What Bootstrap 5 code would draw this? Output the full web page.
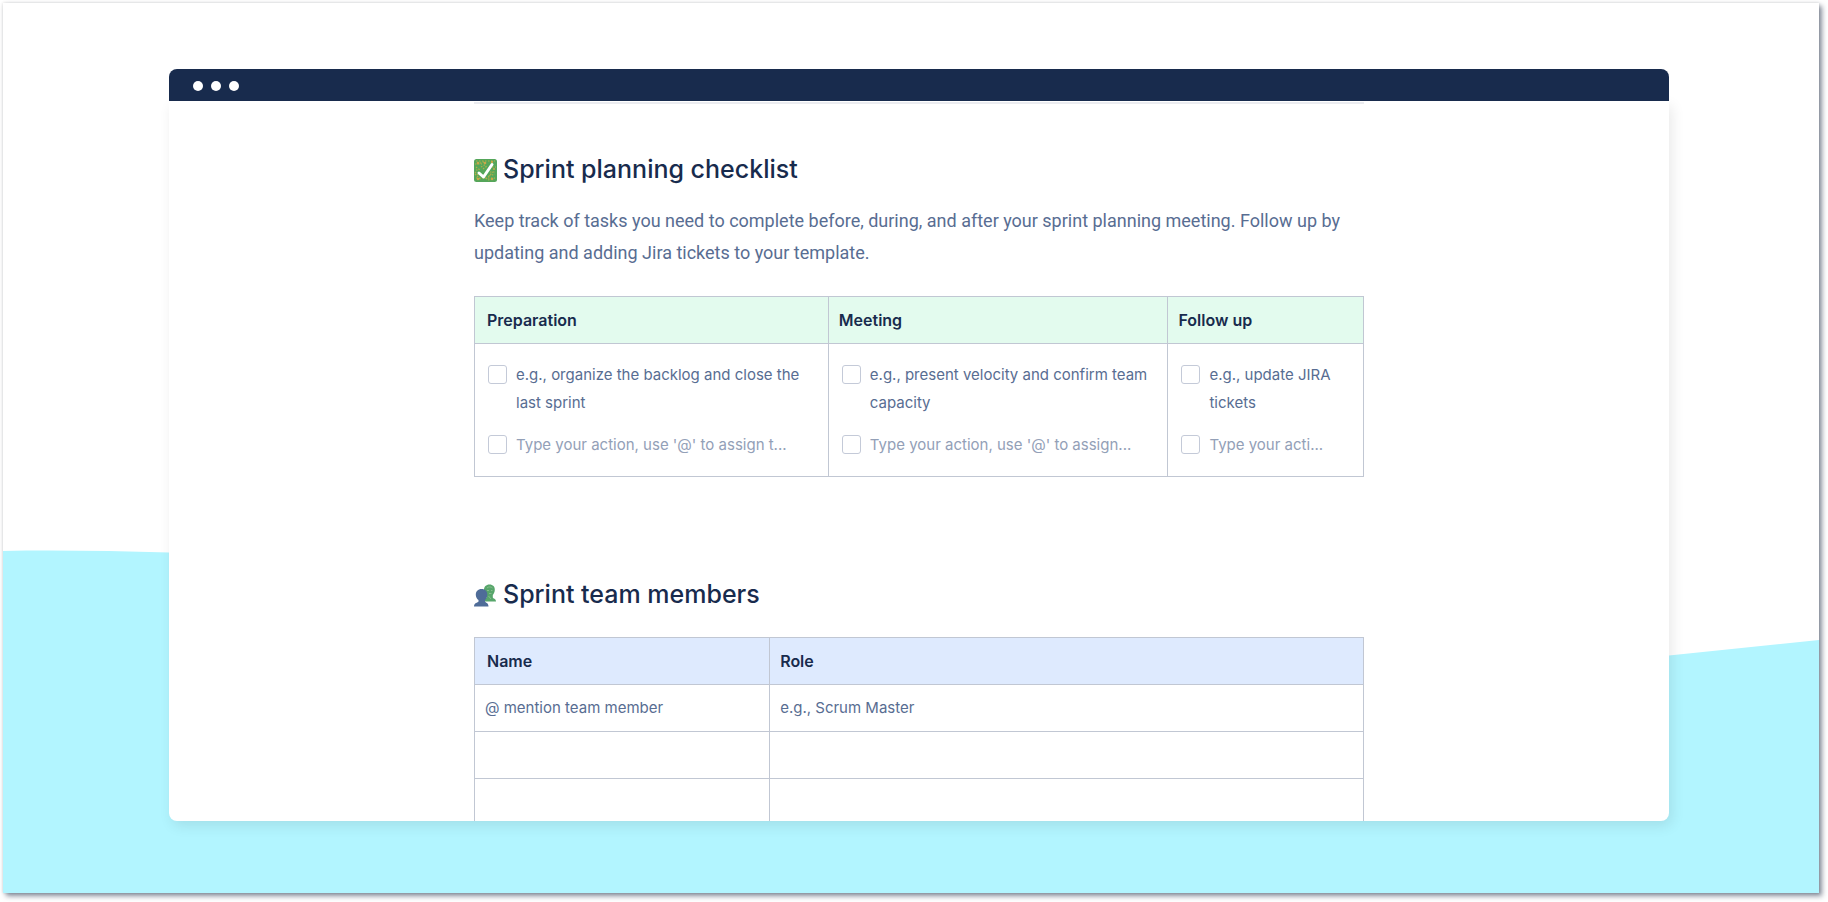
<!DOCTYPE html>
<html lang="en">
<head>
<meta charset="utf-8">
<meta name="viewport" content="width=device-width, initial-scale=1">
<title>Sprint planning</title>
<link href="https://cdn.jsdelivr.net/npm/bootstrap@5.3.0/dist/css/bootstrap.min.css" rel="stylesheet">
<style>
  :root {
    --navy: #182b4d;
    --slate: #586d92;
    --hint: #93a0b7;
    --line: #c1c7d3;
    --cyan: #b2f5ff;
  }
  body {
    font-family: Inter, "Liberation Sans", sans-serif;
    color: var(--slate);
    padding: 3px 9px 9px 3px;
    background: #fff;
  }
  .stage {
    padding: 66px 150px 72px 166px;
    box-shadow: 3px 3px 5px rgba(20, 33, 61, .5), 0 0 3px rgba(0, 0, 0, .15);
  }
  .wave { z-index: 0; fill: var(--cyan); }
  .app-window { z-index: 1; min-height: 0; }
  .title-bar {
    z-index: 2;
    background: var(--navy);
    border-radius: 8px 8px 0 0;
    padding: 12px 24px 10px;
  }
  .dot { width: 10px; height: 10px; background: #fff; }
  .page-body {
    min-height: 0;
    border-radius: 0 0 8px 8px;
    box-shadow: 3px 5px 14px rgba(0, 0, 0, .09);
    padding: 1px 12px 0;
  }
  .doc { max-width: 890px; }
  .doc-rule { height: 2px; background: #ebecf0; border: 0; opacity: 1; margin: 0 0 49px; }
  .doc h2 { gap: 6px; font-size: 25px; line-height: 32px; font-weight: 500; color: var(--navy); }
  .emoji { width: 23px; height: 23px; margin-top: 3px; }
  .intro {
    font-family: Roboto, "Liberation Sans", sans-serif;
    font-size: 18px;
    line-height: 32px;
    margin: 20px 0 27px;
  }
  .grid-table {
    --bs-table-bg: transparent;
    table-layout: fixed;
    border-color: var(--line);
    color: inherit;
    font-size: 15px;
    line-height: 28px;
    margin: 0;
  }
  .grid-table > :not(caption) > * > * { border: 1px solid var(--line); padding: 9px 10px; height: 47px; color: inherit; }
  .grid-table > thead > tr > th { font-size: 16px; font-weight: 600; color: var(--navy); }
  .grid-table > thead > tr > th:first-child { padding-left: 12px; }
  .grid-table.mint > thead > tr > th { background: #e3fbee; }
  .grid-table.sky > thead > tr > th { background: #deeafe; }
  .grid-table > tbody > tr > td.tasks { padding: 17px 10px 17px 13px; }
  .task { display: flex; gap: 9px; }
  .task + .task { margin-top: 14px; }
  .task .form-check-input {
    flex: none;
    width: 19px;
    height: 19px;
    margin: 4px 0 0;
    border: 1px solid #c4cad8;
    border-radius: 3px;
  }
  .hint { color: var(--hint); }
  .checklist { margin-bottom: 101px; }
  .members { margin-top: 27px; }
  @media (max-width: 1200px) {
    .stage { padding: 32px 24px; }
  }
</style>
</head>
<body class="vh-100">
<main class="stage position-relative d-flex h-100">
  <svg class="wave position-absolute top-0 start-0 w-100 h-100" viewBox="0 0 1816 890" preserveAspectRatio="none" aria-hidden="true">
    <path d="M0 548C55 547 110 548 166 549.500C700 566 1000 720 1666 652.500L1816 637V890H0Z"/>
  </svg>

  <div class="app-window position-relative d-flex flex-column flex-fill">
    <div class="title-bar position-relative d-flex gap-2">
      <span class="dot rounded-circle"></span>
      <span class="dot rounded-circle"></span>
      <span class="dot rounded-circle"></span>
    </div>

    <div class="page-body bg-white flex-fill overflow-hidden">
      <article class="doc mx-auto">
        <hr class="doc-rule">

        <section class="checklist">
          <h2 class="d-flex align-items-center mb-0">
            <svg class="emoji" viewBox="0 0 23 23" aria-hidden="true">
              <rect width="23" height="23" rx="2.500" fill="#55a65a"/>
              <g fill="none" stroke="#b5ae48" stroke-width="1.200" stroke-dasharray="1.500 1.500">
                <path d="M2 2H21M1 5H8M18 8H22M2 8L6 11M2 11H5M1 15L7 21M16 13H22M15 17L21 15M2 19H21M14 21L21 19M3 5L10 3M1 13L5 17M12 20L20 12M7 8L12 5M9 10L13 7"/>
              </g>
              <g fill="#c9a74a"><circle cx="4" cy="4" r="1.300"/><circle cx="11" cy="4" r="1.300"/><circle cx="18" cy="3" r="1.200"/><circle cx="4" cy="20" r="1.200"/><circle cx="18" cy="20" r="1.300"/><circle cx="20" cy="10" r="1"/></g>
              <path d="M5 14L9.500 18L18 5.500" fill="none" stroke="#fff" stroke-width="3" stroke-linecap="round" stroke-linejoin="round"/>
            </svg>
            Sprint planning checklist
          </h2>
          <p class="intro">Keep track of tasks you need to complete before, during, and after your sprint planning meeting. Follow up by updating and adding Jira tickets to your template.</p>

          <table class="table grid-table mint">
            <colgroup><col style="width:39.800%"><col style="width:38.200%"><col></colgroup>
            <thead>
              <tr><th scope="col">Preparation</th><th scope="col">Meeting</th><th scope="col">Follow up</th></tr>
            </thead>
            <tbody>
              <tr>
                <td class="tasks">
                  <div class="task"><input class="form-check-input" type="checkbox" id="prep1"><label for="prep1">e.g., organize the backlog and close the last sprint</label></div>
                  <div class="task"><input class="form-check-input" type="checkbox" id="prep2"><label class="hint" for="prep2">Type your action, use '@' to assign t...</label></div>
                </td>
                <td class="tasks">
                  <div class="task"><input class="form-check-input" type="checkbox" id="meet1"><label for="meet1">e.g., present velocity and confirm team capacity</label></div>
                  <div class="task"><input class="form-check-input" type="checkbox" id="meet2"><label class="hint" for="meet2">Type your action, use '@' to assign...</label></div>
                </td>
                <td class="tasks">
                  <div class="task"><input class="form-check-input" type="checkbox" id="follow1"><label for="follow1">e.g., update JIRA tickets</label></div>
                  <div class="task"><input class="form-check-input" type="checkbox" id="follow2"><label class="hint" for="follow2">Type your acti...</label></div>
                </td>
              </tr>
            </tbody>
          </table>
        </section>

        <section>
          <h2 class="d-flex align-items-center mb-0">
            <svg class="emoji" viewBox="0 0 23 23" aria-hidden="true">
              <path d="M15.500 0.500C19 0.500 21 2.800 20.800 6C20.700 8.500 19.500 10 18.800 11V13.500C19 14.600 22 14.500 22 17.500H9.500C10 14.500 12.200 14.500 12.500 13.500V11C11 10 10 8.500 10 6C10 2.800 12 0.500 15.500 0.500Z" fill="#57a66b"/>
              <path d="M13 4C14.500 2.500 17 2.500 18.500 4M13 6.500H15M17 6.500H18.500M15 9.500H17.500M14.500 12L17 15" fill="none" stroke="#86bd8c" stroke-width="1"/>
              <path d="M7.500 5C11.500 5 13.500 7.500 13.300 11C13.200 13.500 12 15 11 16V17.500C11.500 19 14.500 18.500 14.500 22.500H0C0 18.500 3.800 19 4.500 17.500V16C3 15 2 13.500 1.800 11C1.600 7.500 4 5 7.500 5Z" fill="#4f6c98"/>
            </svg>
            Sprint team members
          </h2>

          <table class="table grid-table sky members">
            <colgroup><col style="width:33.200%"><col></colgroup>
            <thead>
              <tr><th scope="col">Name</th><th scope="col">Role</th></tr>
            </thead>
            <tbody>
              <tr><td>@ mention team member</td><td>e.g., Scrum Master</td></tr>
              <tr><td></td><td></td></tr>
              <tr><td></td><td></td></tr>
            </tbody>
          </table>
        </section>
      </article>
    </div>
  </div>
</main>
<script src="https://cdn.jsdelivr.net/npm/bootstrap@5.3.0/dist/js/bootstrap.bundle.min.js"></script>
</body>
</html>
